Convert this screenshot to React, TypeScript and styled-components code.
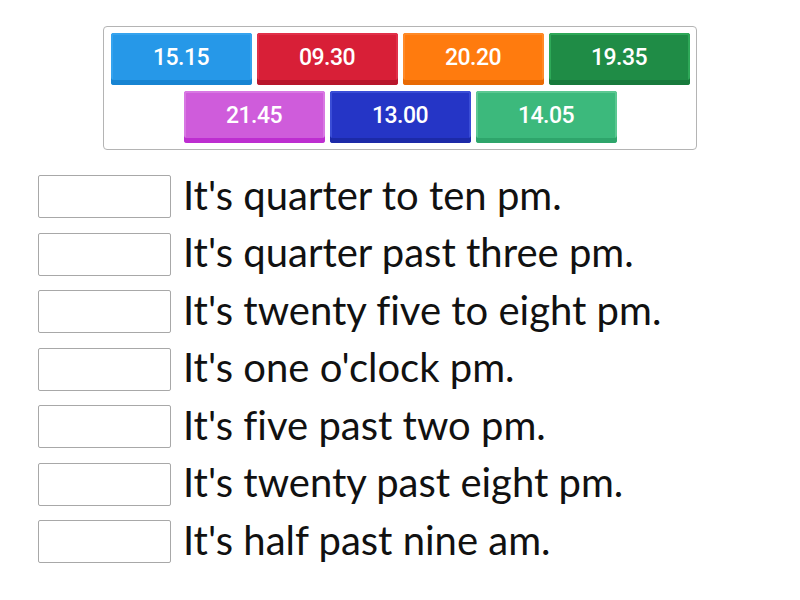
import React from "react";
import styled, { createGlobalStyle } from "styled-components";

const Global = createGlobalStyle`
  html, body { margin: 0; padding: 0; background: #fff; }
  body { font-family: "Lato", "Open Sans", sans-serif; }
`;

const Page = styled.div`
  width: 800px;
  height: 600px;
  padding-top: 26px;
  box-sizing: border-box;
  display: flex;
  flex-direction: column;
  align-items: center;
`;

const Bank = styled.div`
  width: 594px;
  box-sizing: border-box;
  border: 1px solid #b4b4b4;
  border-radius: 4px;
  padding: 6px;
  display: flex;
  flex-wrap: wrap;
  justify-content: center;
  gap: 6px 5px;
`;

const Tile = styled.div<{ $c: string; $d: string; $l: string }>`
  width: 141px;
  height: 52px;
  box-sizing: border-box;
  border-radius: 3px;
  background: ${(p) => p.$c};
  box-shadow: inset 0 -5px 0 ${(p) => p.$d}, inset 0 2px 0 ${(p) => p.$l},
    inset 2px 0 0 ${(p) => p.$l}, inset -2px 0 0 ${(p) => p.$l};
  color: #fff;
  font-family: "Roboto", sans-serif;
  font-weight: 500;
  font-size: 23px;
  letter-spacing: -0.5px;
  display: flex;
  align-items: center;
  justify-content: center;
  padding-bottom: 4px;
`;

const List = styled.div`
  align-self: stretch;
  margin-top: 25px;
  padding-left: 38px;
  display: flex;
  flex-direction: column;
  gap: 14.5px;
`;

const Row = styled.div`
  display: flex;
  align-items: center;
  gap: 12px;
  height: 43px;
`;

const Slot = styled.div`
  width: 133px;
  height: 43px;
  box-sizing: border-box;
  border: 1px solid #a8a8a8;
  border-radius: 2px;
  background: #fff;
`;

const Sentence = styled.div`
  font-family: "Lato", sans-serif;
  font-size: 40px;
  font-variant-ligatures: none;
  color: #111;
  line-height: 1;
  padding-bottom: 4px;
  white-space: nowrap;
`;

const tiles = [
  { t: "15.15", c: "#2698e8", d: "#1784d2", l: "#35a3ee" },
  { t: "09.30", c: "#d81f37", d: "#b8162c", l: "#e13049" },
  { t: "20.20", c: "#ff7b0e", d: "#e86a04", l: "#ff8a27" },
  { t: "19.35", c: "#1f8c46", d: "#187a3c", l: "#2ea858" },
  { t: "21.45", c: "#cf5cdb", d: "#bd2ed0", l: "#d878e3" },
  { t: "13.00", c: "#2535c6", d: "#1c2aa8", l: "#3a4dd6" },
  { t: "14.05", c: "#3cb97c", d: "#2ea56b", l: "#5cc892" },
];

const sentences = [
  "It's quarter to ten pm.",
  "It's quarter past three pm.",
  "It's twenty five to eight pm.",
  "It's one o'clock pm.",
  "It's five past two pm.",
  "It's twenty past eight pm.",
  "It's half past nine am.",
];

export default function App() {
  return (
    <>
      <Global />
      <Page>
        <Bank>
          {tiles.map((x) => (
            <Tile key={x.t} $c={x.c} $d={x.d} $l={x.l}>
              {x.t}
            </Tile>
          ))}
        </Bank>
        <List>
          {sentences.map((s) => (
            <Row key={s}>
              <Slot />
              <Sentence>{s}</Sentence>
            </Row>
          ))}
        </List>
      </Page>
    </>
  );
}
